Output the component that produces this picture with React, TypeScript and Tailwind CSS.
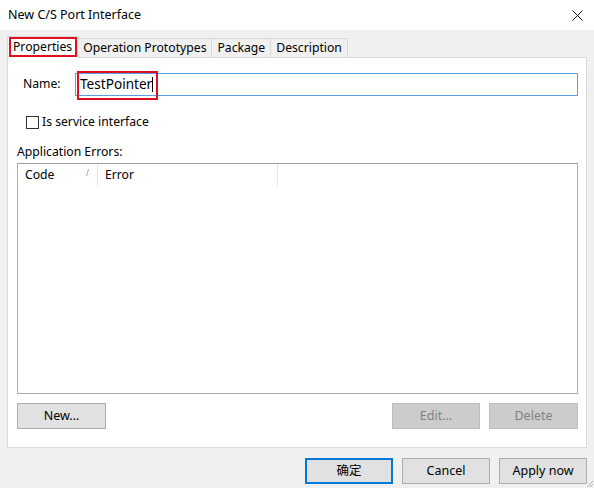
import { useState } from "react";

const font = { fontFamily: '"Noto Sans", "Noto Sans CJK SC", sans-serif' };

function Btn({ label, disabled, primary, w }: { label: string; disabled?: boolean; primary?: boolean; w: string }) {
  return (
    <button
      disabled={disabled}
      className={`${w} h-[26px] text-[12.5px] leading-none border ${
        disabled
          ? "bg-[#cccccc] border-[#bfbfbf] text-[#838383]"
          : primary
          ? "bg-[#e1e1e1] border-[#0078d7] border-2 text-black"
          : "bg-[#e1e1e1] border-[#adadad] text-black"
      }`}
    >
      {label}
    </button>
  );
}

export default function App() {
  const [service, setService] = useState(false);
  const tabs = ["Properties", "Operation Prototypes", "Package", "Description"];

  return (
    <div className="relative w-[594px] h-[488px] bg-[#f0f0f0] flex flex-col text-black overflow-hidden" style={font}>
      {/* title bar */}
      <div className="h-[30px] bg-white flex items-center justify-between pl-[8px] pr-[10px] shrink-0">
        <span className="text-[12.5px]">New C/S Port Interface</span>
        <svg width="11" height="11" viewBox="0 0 11 11" className="mr-[1px]">
          <path d="M0.5 0.5 L10.5 10.5 M10.5 0.5 L0.5 10.5" stroke="#111" strokeWidth="1" />
        </svg>
      </div>

      {/* tabs */}
      <div className="flex items-end pl-[7px] pt-[6px] relative z-10">
        {tabs.map((t, i) => (
          <div
            key={t}
            className={`px-[5px] text-[12.2px] flex items-center border border-[#d9d9d9] -ml-px first:ml-0 ${
              i === 0 ? "h-[22px] bg-white border-b-white -mb-px" : "h-[19px] bg-[#f0f0f0] border-b-0"
            }`}
          >
            {t}
          </div>
        ))}
      </div>

      {/* panel */}
      <div className="mx-[7px] h-[391px] bg-white border border-[#d9d9d9] flex flex-col pl-[9px] pr-[8px] pt-[15px]">
        <div className="flex items-center h-[23px]">
          <span className="text-[12.2px] ml-[6px] w-[52px]">Name:</span>
          <div className="flex-1 h-[23px] border border-[#56a0e4] flex items-center pl-[4px] text-[13.6px]">
            TestPointer
            <span className="inline-block w-px h-[15px] bg-black" />
          </div>
        </div>

        <label className="flex items-center ml-[9px] mt-[20px] h-[13px] text-[12.2px] cursor-default">
          <input
            type="checkbox"
            checked={service}
            onChange={(e) => setService(e.target.checked)}
            className="appearance-none w-[13px] h-[13px] border border-[#333] bg-white mr-[3px]"
          />
          Is service interface
        </label>

        <div className="text-[12.2px] mt-[14px] h-[18px] leading-[18px]">Application Errors:</div>

        <div className="mt-[2px] h-[231px] border border-[#adadad] border-t-[#a0a0a0] bg-white">
          <div className="flex h-[22px] text-[12.2px]">
            <div className="w-[80px] pl-[7px] flex items-center relative border-r border-[#e5e5e5]">
              Code
              <span className="absolute left-[68px] top-[3px] text-[8px] text-[#888]">/</span>
            </div>
            <div className="w-[180px] pl-[7px] flex items-center border-r border-[#e5e5e5]">Error</div>
          </div>
        </div>

        <div className="flex mt-[9px] gap-[9px]">
          <Btn label="New..." w="w-[89px]" />
          <div className="flex-1" />
          <Btn label="Edit..." w="w-[88px]" disabled />
          <Btn label="Delete" w="w-[89px]" disabled />
        </div>
      </div>

      {/* dialog buttons */}
      <div className="flex justify-end gap-[9px] pr-[7px] mt-[10px]">
        <Btn label="确定" w="w-[88px]" primary />
        <Btn label="Cancel" w="w-[88px]" />
        <Btn label="Apply now" w="w-[88px]" />
      </div>

      {/* resize grip */}
      <svg width="10" height="10" viewBox="0 0 10 10" className="absolute right-0 bottom-0">
        <path d="M9 3 L3 9 M9 6 L6 9" stroke="#b0b0b0" strokeWidth="1" />
      </svg>

      {/* annotation boxes */}
      <div className="absolute z-20 left-[9px] top-[37px] w-[68px] h-[20px] border-2 border-[#e0101e] pointer-events-none" />
      <div className="absolute z-20 left-[77px] top-[71px] w-[81px] h-[29px] border-2 border-[#e0101e] pointer-events-none" />
    </div>
  );
}
